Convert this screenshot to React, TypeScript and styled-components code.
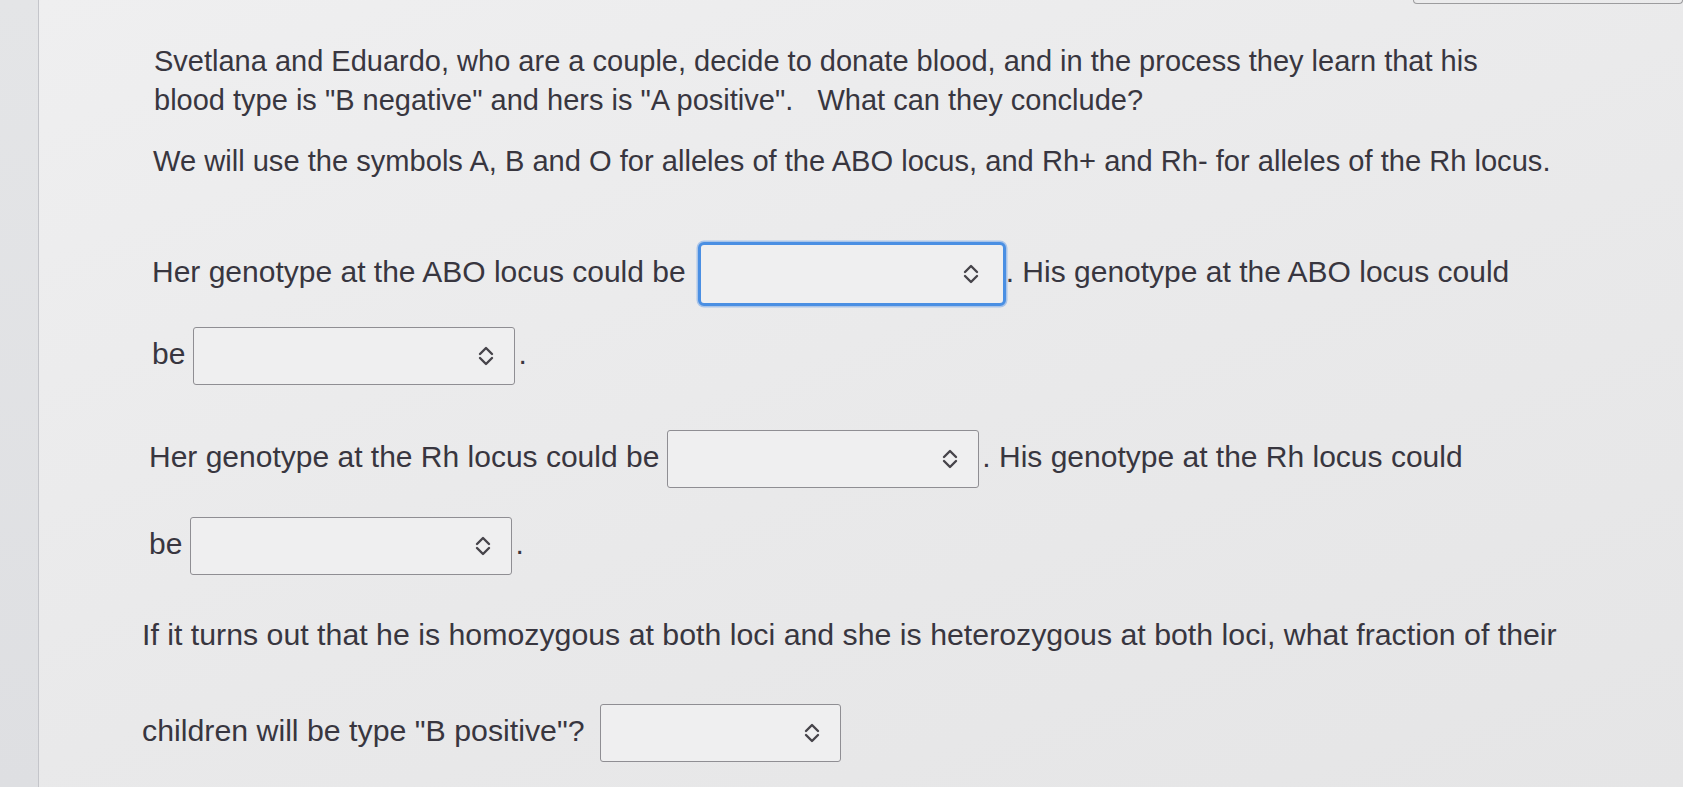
import React from "react"
import styled, { createGlobalStyle } from "styled-components"

const GlobalStyle = createGlobalStyle`
  html, body {
    margin: 0;
    padding: 0;
    background: #e2e3e5;
  }
  body {
    font-family: "Liberation Sans", Arial, Helvetica, sans-serif;
  }
`

const Page = styled.div`
  display: flex;
  min-height: 787px;
  width: 1683px;
  overflow: hidden;
`

const Gutter = styled.div`
  width: 38px;
  flex-shrink: 0;
  background: linear-gradient(180deg, #e4e5e7 0%, #dedfe2 100%);
`

const Panel = styled.div`
  flex: 1;
  border-left: 1.5px solid #c4c5ca;
  background: linear-gradient(160deg, #efeff0 0%, #e9e9ea 55%, #e5e5e6 100%);
  padding: 0 0 0 115px;
`

const TopBar = styled.div`
  display: flex;
  justify-content: flex-end;
`

const TabEdge = styled.div`
  width: 268px;
  height: 3px;
  border: 1.5px solid #9c9c9e;
  border-top: none;
  border-radius: 0 0 6px 6px;
`

// sizes drift a little down the page, as in the photographed screen
const Paragraph = styled.p<{ $lh: number; $mt: number; $fs: number; $indent: number }>`
  margin: ${({ $mt }) => $mt}px 0 0 ${({ $indent }) => $indent}px;
  font-size: ${({ $fs }) => $fs}px;
  line-height: ${({ $lh }) => $lh}px;
  color: #38363f;
  white-space: nowrap;
`

const SelectBox = styled.span<{ $w: number; $gap: number; $focused?: boolean }>`
  display: inline-flex;
  align-items: center;
  justify-content: flex-end;
  vertical-align: middle;
  box-sizing: border-box;
  width: ${({ $w }) => $w}px;
  height: ${({ $focused }) => ($focused ? 64 : 58)}px;
  margin: 0 ${({ $focused }) => ($focused ? 0 : 3)}px 0 ${({ $gap }) => $gap}px;
  padding-right: ${({ $focused }) => ($focused ? 24 : 20)}px;
  background: #efeff0;
  border: ${({ $focused }) =>
    $focused ? "3px solid #4a8fe3" : "1.5px solid #8f8e93"};
  border-radius: ${({ $focused }) => ($focused ? 6 : 3)}px;
  box-shadow: ${({ $focused }) =>
    $focused ? "0 0 0 1.5px rgba(90, 150, 230, 0.45)" : "none"};
`

const Chevrons = () => (
  <svg width="16" height="24" viewBox="0 0 16 24" fill="none">
    <path
      d="M2 10 L8 4 L14 10"
      stroke="#46444a"
      strokeWidth="2.4"
      strokeLinecap="round"
      strokeLinejoin="round"
    />
    <path
      d="M2 14 L8 20 L14 14"
      stroke="#46444a"
      strokeWidth="2.4"
      strokeLinecap="round"
      strokeLinejoin="round"
    />
  </svg>
)

const Select = ({
  width,
  focused,
  gap = 8,
}: {
  width: number
  focused?: boolean
  gap?: number
}) => (
  <SelectBox $w={width} $gap={gap} $focused={focused}>
    <Chevrons />
  </SelectBox>
)

const App = (): JSX.Element => (
  <>
    <GlobalStyle />
    <Page>
      <Gutter />
      <Panel>
        <TopBar>
          <TabEdge />
        </TopBar>
        <Paragraph $lh={39} $mt={38} $fs={29} $indent={0}>
          Svetlana and Eduardo, who are a couple, decide to donate blood, and
          in the process they learn that his
          <br />
          blood type is "B negative" and hers is "A positive". &nbsp; What can
          they conclude?
        </Paragraph>
        <Paragraph $lh={39} $mt={22} $fs={29.1} $indent={-1}>
          We will use the symbols A, B and O for alleles of the ABO locus, and
          Rh+ and Rh- for alleles of the Rh locus.
        </Paragraph>
        <Paragraph $lh={82} $mt={50} $fs={30} $indent={-2}>
          Her genotype at the ABO locus could be
          <Select width={308} gap={12} focused />. His genotype at the ABO
          locus could
          <br />
          be
          <Select width={322} />.
        </Paragraph>
        <Paragraph $lh={87} $mt={18} $fs={30} $indent={-5}>
          Her genotype at the Rh locus could be
          <Select width={312} />. His genotype at the Rh locus could
          <br />
          be
          <Select width={322} />.
        </Paragraph>
        <Paragraph $lh={96} $mt={0} $fs={30.3} $indent={-12}>
          If it turns out that he is homozygous at both loci and she is
          heterozygous at both loci, what fraction of their
          <br />
          children will be type "B positive"?
          <Select width={241} gap={15} />
        </Paragraph>
      </Panel>
    </Page>
  </>
)

export default App
